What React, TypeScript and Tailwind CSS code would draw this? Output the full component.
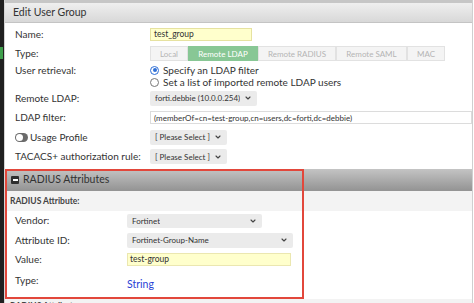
import { ChevronDown } from 'lucide-react';

const FONT = "font-['Lato','Open_Sans',sans-serif]";

const SEGMENTS = [
  { label: 'Local', w: 'w-[38px]', active: false },
  { label: 'Remote LDAP', w: 'w-[70px]', active: true },
  { label: 'Remote RADIUS', w: 'w-[78px]', active: false },
  { label: 'Remote SAML', w: 'w-[71px]', active: false },
  { label: 'MAC', w: 'w-[38px]', active: false },
];

function Select({ text, className }: { text: string; className: string }) {
  return (
    <div
      className={`flex items-center justify-between rounded-[2px] bg-[#ebebeb] pl-[5px] pr-[5px] text-[8px] text-[#333] ${className}`}
    >
      <span className="truncate">{text}</span>
      <ChevronDown size={8} strokeWidth={3.4} className="shrink-0 text-[#444]" />
    </div>
  );
}

function Row({ label, h, children }: { label: React.ReactNode; h: string; children?: React.ReactNode }) {
  return (
    <div className={`flex shrink-0 items-center ${h}`}>
      <div className="w-[135px] shrink-0 whitespace-nowrap text-[10px] text-[#333]">{label}</div>
      {children}
    </div>
  );
}

function RadRow({ label, h, children }: { label: string; h: string; children?: React.ReactNode }) {
  return (
    <div className={`flex shrink-0 items-center pl-[10px] ${h}`}>
      <div className="w-[112px] shrink-0 text-[10px] text-[#333]">{label}</div>
      {children}
    </div>
  );
}

export default function App() {
  return (
    <div className={`relative flex h-[303px] w-[474px] overflow-hidden bg-white ${FONT}`}>
      {/* dark rail of the surrounding window */}
      <div className="flex w-[5px] shrink-0 flex-col border-r border-[#d4d4d4] bg-[#202020]">
        <div className="mt-[47px] h-[12px] w-[3px] bg-[#3f9f4c]" />
      </div>

      <div className="flex w-[468px] shrink-0 flex-col border-r border-[#cfcfcf]">
        <div className="h-[3px] shrink-0 bg-[#c6c6c6]" />
        <div className="flex h-[20px] shrink-0 items-center border-b border-[#c4c4c4] bg-gradient-to-b from-[#efefef] to-[#d8d8d8] pl-[8px] text-[10.5px] text-[#333]">
          Edit User Group
        </div>

        <div className="flex shrink-0 flex-col pl-[10px]">
          <Row label="Name:" h="h-[22px]">
            <div className="flex h-[13px] w-[102px] items-center border border-[#e6e2a0] bg-[#ffffcc] pl-[3px] text-[8.5px] text-[#333]">
              test_group
            </div>
          </Row>
          <Row label="Type:" h="h-[17px]">
            <div className="flex h-[15px]">
              {SEGMENTS.map(s => (
                <div
                  key={s.label}
                  className={`flex items-center justify-center text-[8px] ${s.w} ${
                    s.active
                      ? 'bg-[#88c795] text-white'
                      : 'border border-[#e2e2e2] bg-[#f4f4f4] text-[#b5b5b5]'
                  }`}
                >
                  {s.label}
                </div>
              ))}
            </div>
          </Row>
          <div className="flex h-[27px] shrink-0 pt-[2px]">
            <div className="h-[12px] w-[135px] shrink-0 text-[10px] leading-[12px] text-[#333]">User retrieval:</div>
            <div className="flex flex-col text-[10px] leading-[12px] text-[#333]">
              <div className="flex h-[12px] items-center gap-[4px]">
                <span className="flex h-[9px] w-[9px] items-center justify-center rounded-full border-[1.5px] border-[#2f6fd6]">
                  <span className="h-[4px] w-[4px] rounded-full bg-[#2f6fd6]" />
                </span>
                Specify an LDAP filter
              </div>
              <div className="flex h-[12px] items-center gap-[4px]">
                <span className="h-[9px] w-[9px] rounded-full border border-[#777]" />
                Set a list of imported remote LDAP users
              </div>
            </div>
          </div>
          <Row label="Remote LDAP:" h="h-[18px]">
            <Select text="forti.debbie (10.0.0.254)" className="h-[15px] w-[107px]" />
          </Row>
          <Row label="LDAP filter:" h="h-[21px]">
            <div className="flex h-[13px] flex-1 items-center border border-[#dcdcdc] bg-white pl-[3px] text-[8px] text-[#333]">
              (memberOf=cn=test-group,cn=users,dc=forti,dc=debbie)
            </div>
          </Row>
          <Row
            h="h-[18px]"
            label={
              <span className="flex items-center gap-[2px]">
                <span className="flex h-[9px] w-[13px] items-center rounded-full bg-[#6b6b6b] pl-[1px]">
                  <span className="h-[7px] w-[7px] rounded-full bg-white" />
                </span>
                Usage Profile
              </span>
            }
          >
            <Select text="[ Please Select ]" className="h-[15px] w-[77px]" />
          </Row>
          <Row label="TACACS+ authorization rule:" h="h-[21px]">
            <Select text="[ Please Select ]" className="h-[15px] w-[77px]" />
          </Row>
        </div>

        <div className="mt-[2px] flex h-[22px] shrink-0 items-center gap-[4px] bg-gradient-to-b from-[#c4c4c4] to-[#939393] pl-[6px] text-[10.5px] text-[#333]">
          <span className="flex h-[8px] w-[8px] items-center justify-center rounded-[1px] bg-[#2e2e2e]">
            <span className="h-[1.5px] w-[5px] bg-white" />
          </span>
          RADIUS Attributes
        </div>
        <div className="flex h-[20px] shrink-0 items-center bg-[#f3f3f3] pl-[5px] text-[8.5px] font-bold text-[#444]">
          RADIUS Attribute:
        </div>
        <RadRow label="Vendor:" h="h-[19px]">
          <Select text="Fortinet" className="h-[14px] w-[135px]" />
        </RadRow>
        <RadRow label="Attribute ID:" h="h-[20px]">
          <Select text="Fortinet-Group-Name" className="h-[15px] w-[166px]" />
        </RadRow>
        <RadRow label="Value:" h="h-[19px]">
          <div className="flex h-[13px] w-[164px] items-center border border-[#ebe7b0] bg-[#ffffcc] pl-[2px] text-[8.5px] text-[#333]">
            test-group
          </div>
        </RadRow>
        <div className="flex h-[30px] shrink-0 pl-[10px]">
          <div className="mt-[5px] h-[12px] w-[112px] shrink-0 text-[10px] leading-[12px] text-[#333]">Type:</div>
          <div className="mt-[9px] h-[12px] text-[10.5px] leading-[12px] text-[#2a3fd6]">String</div>
        </div>
        <div className="flex h-[20px] shrink-0 items-start bg-[#f3f3f3] pl-[5px] pt-[1px] text-[8.5px] font-bold text-[#444]">
          RADIUS Attribute:
        </div>
      </div>

      {/* highlight annotation */}
      <div className="pointer-events-none absolute left-[5px] top-[169px] h-[130px] w-[299px] border-2 border-[#e2473b]" />
    </div>
  );
}
